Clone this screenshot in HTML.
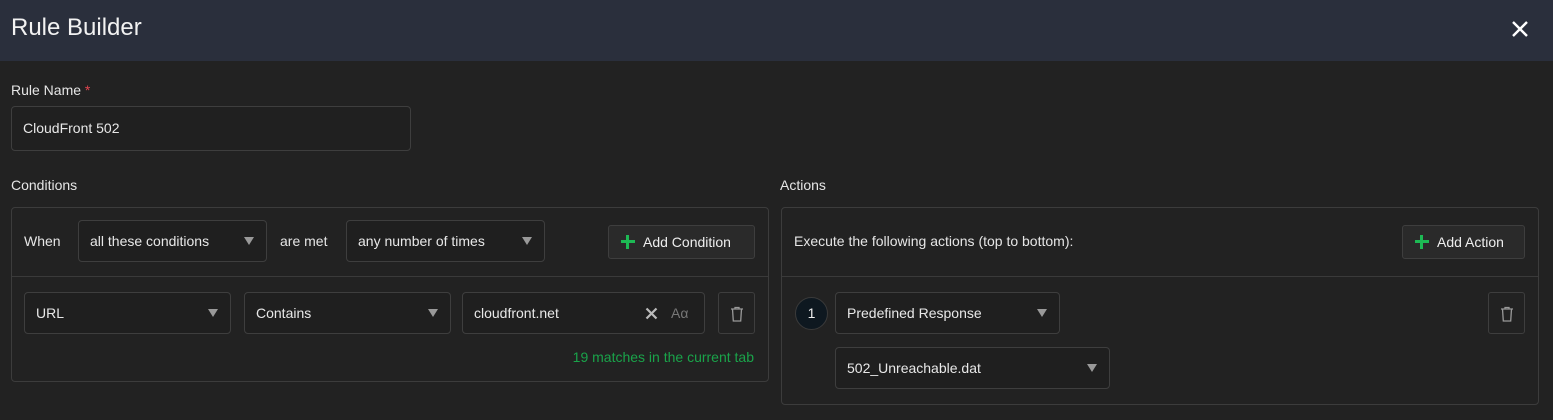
<!DOCTYPE html>
<html><head><style>
*{box-sizing:border-box;margin:0;padding:0}
body{width:1553px;height:420px;background:#222;font-family:"Liberation Sans",sans-serif;color:#e6e6e6;position:relative;overflow:hidden;font-size:14px}
.a{position:absolute}
.hdr{left:0;top:0;width:1553px;height:61px;background:#2a2f3c}
.box{position:absolute;border:1px solid #3c3c3c;border-radius:4px;background:#222}
.sel{position:absolute;border:1px solid #3e3e3e;border-radius:4px;background:#1f1f1f;height:42px;line-height:40px;padding-left:11px;font-size:14px;color:#e8e8e8}
.sel .ar{position:absolute;right:12px;top:16px;width:0;height:0;border-left:5px solid transparent;border-right:5px solid transparent;border-top:8px solid #999}
.btn{position:absolute;border:1px solid #3e3e3e;border-radius:3px;background:#2a2a2a;height:34px;line-height:32px;font-size:14px;color:#eee;padding-left:34px}
.btn .p{position:absolute;left:12px;top:9px;width:14px;height:14px}
.btn .p:before{content:"";position:absolute;left:5px;top:0;width:3px;height:14px;background:#1db954}
.btn .p:after{content:"";position:absolute;left:0;top:5px;width:14px;height:3px;background:#1db954}
.lbl{position:absolute;font-size:14px;color:#e6e6e6}
.trash{position:absolute;border:1px solid #3e3e3e;border-radius:3px;background:#222;width:37px;height:42px}
</style></head><body>
<div class="a hdr"></div>
<div class="a" style="left:11px;top:14px;font-size:24px;color:#f2f2f2">Rule Builder</div>
<svg class="a" style="left:1511px;top:20px" width="18" height="18" viewBox="0 0 18 18"><path d="M2 2L16 16M16 2L2 16" stroke="#fff" stroke-width="2.4"/></svg>

<div class="lbl" style="left:11px;top:82px">Rule Name <span style="color:#e0454f">*</span></div>
<div class="sel" style="left:11px;top:106px;width:400px;height:45px;line-height:43px;background:#202020">CloudFront 502</div>

<div class="lbl" style="left:11px;top:177px">Conditions</div>
<div class="lbl" style="left:780px;top:177px">Actions</div>

<div class="box" style="left:11px;top:207px;width:758px;height:175px"></div>
<div class="a" style="left:12px;top:276px;width:756px;height:1px;background:#3a3a3a"></div>
<div class="lbl" style="left:24px;top:233px">When</div>
<div class="sel" style="left:78px;top:220px;width:189px">all these conditions<span class="ar"></span></div>
<div class="lbl" style="left:280px;top:233px">are met</div>
<div class="sel" style="left:346px;top:220px;width:199px">any number of times<span class="ar"></span></div>
<div class="btn" style="left:608px;top:225px;width:147px"><span class="p"></span>Add Condition</div>

<div class="sel" style="left:24px;top:292px;width:207px">URL<span class="ar"></span></div>
<div class="sel" style="left:244px;top:292px;width:207px">Contains<span class="ar"></span></div>
<div class="sel" style="left:462px;top:292px;width:243px">cloudfront.net
<svg class="a" style="left:182px;top:14px" width="13" height="13" viewBox="0 0 13 13"><path d="M1.5 1.5L11.5 11.5M11.5 1.5L1.5 11.5" stroke="#bbb" stroke-width="2.2"/></svg>
<span class="a" style="left:208px;top:0;color:#777;font-size:14px">Aα</span></div>
<div class="trash" style="left:718px;top:292px"><svg class="a" style="left:11px;top:13px" width="14" height="16" viewBox="0 0 14 16"><path d="M1 3H13M5 3V1.5H9V3M2.5 3L3.3 15H10.7L11.5 3" fill="none" stroke="#999" stroke-width="1.3"/></svg></div>
<div class="a" style="right:799px;top:349px;color:#1aa34a;font-size:14px">19 matches in the current tab</div>

<div class="box" style="left:781px;top:207px;width:758px;height:198px"></div>
<div class="a" style="left:782px;top:276px;width:756px;height:1px;background:#3a3a3a"></div>
<div class="lbl" style="left:794px;top:233px">Execute the following actions (top to bottom):</div>
<div class="btn" style="left:1402px;top:225px;width:123px"><span class="p"></span>Add Action</div>
<div class="a" style="left:795px;top:297px;width:33px;height:33px;border-radius:50%;background:#0e1820;border:1px solid #3a3a3a;text-align:center;line-height:31px;color:#eee">1</div>
<div class="sel" style="left:835px;top:292px;width:225px">Predefined Response<span class="ar"></span></div>
<div class="trash" style="left:1488px;top:292px"><svg class="a" style="left:11px;top:13px" width="14" height="16" viewBox="0 0 14 16"><path d="M1 3H13M5 3V1.5H9V3M2.5 3L3.3 15H10.7L11.5 3" fill="none" stroke="#999" stroke-width="1.3"/></svg></div>
<div class="sel" style="left:835px;top:347px;width:275px">502_Unreachable.dat<span class="ar"></span></div>
</body></html>
